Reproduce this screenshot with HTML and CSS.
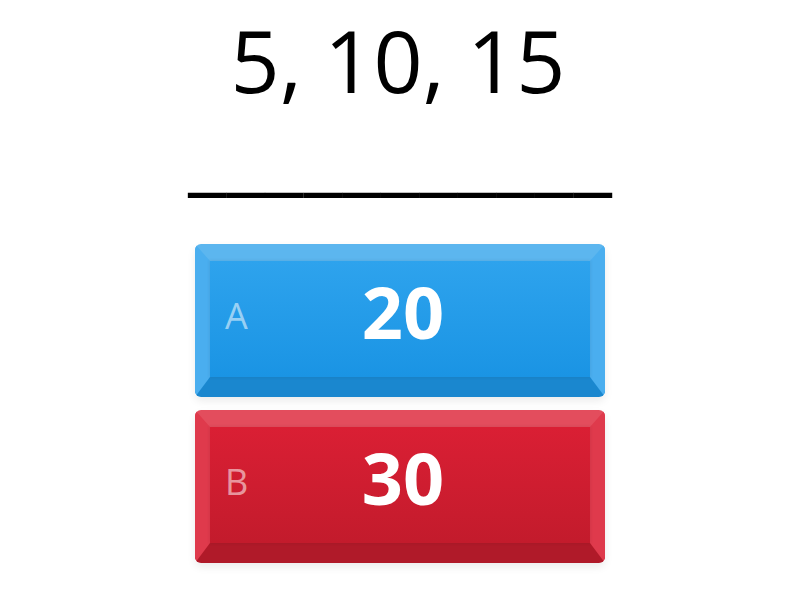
FILE: index.html
```html
<!DOCTYPE html>
<html>
<head>
<meta charset="utf-8">
<link rel="stylesheet" href="styles.css">
</head>
<body>
<main class="quiz">
  <div class="question">5, 10, 15</div>
  <div class="blank">___________</div>
  <div class="answers">
    <button class="answer answer-blue"><span class="letter">A</span><span class="value">20</span><span class="spacer"></span></button>
    <button class="answer answer-red"><span class="letter">B</span><span class="value">30</span><span class="spacer"></span></button>
  </div>
</main>
</body>
</html>
```

FILE: styles.css
```css
html, body {
  margin: 0;
  padding: 0;
  background: #ffffff;
}
body {
  font-family: "Open Sans", "Liberation Sans", sans-serif;
  width: 800px;
  height: 600px;
  overflow: hidden;
}
.quiz {
  display: flex;
  flex-direction: column;
  align-items: center;
}
.question {
  font-size: 86px;
  line-height: 120px;
  height: 120px;
  color: #000;
  margin-left: -4px;
}
.blank {
  font-size: 88px;
  line-height: 60px;
  height: 60px;
  color: #000;
  margin-top: 1px;
}
.answers {
  margin-top: 63px;
  display: flex;
  flex-direction: column;
  gap: 13px;
}
.answer {
  position: relative;
  width: 410px;
  height: 153px;
  box-sizing: border-box;
  border-style: solid;
  border-width: 17px 15px 20px 15px;
  border-radius: 6px;
  padding: 0;
  font-family: inherit;
  display: grid;
  grid-template-columns: 1fr auto 1fr;
  align-items: center;
  box-shadow: 0 4px 8px rgba(0,0,0,0.08);
  cursor: pointer;
}
.answer::before {
  content: "";
  position: absolute;
  inset: 0;
  box-shadow: 0 0 3px 1px rgba(0,0,0,0.06);
  pointer-events: none;
}
.answer-blue {
  border-color: #5cb6ef #4aaeef #1a87cf #4aaeef;
  background: linear-gradient(#2ea3ed, #1a94e4);
}
.answer-red {
  border-color: #e34d5d #df3a4c #b01a29 #df3a4c;
  background: linear-gradient(#da1f34, #c31b2c);
}
.letter {
  justify-self: start;
  padding-left: 15px;
  font-size: 36px;
  color: rgba(255,255,255,0.55);
  margin-top: -8px;
}
.value {
  font-size: 72px;
  font-weight: 700;
  color: #fff;
  line-height: 1;
  padding-left: 6px;
  margin-top: -16px;
}
```
